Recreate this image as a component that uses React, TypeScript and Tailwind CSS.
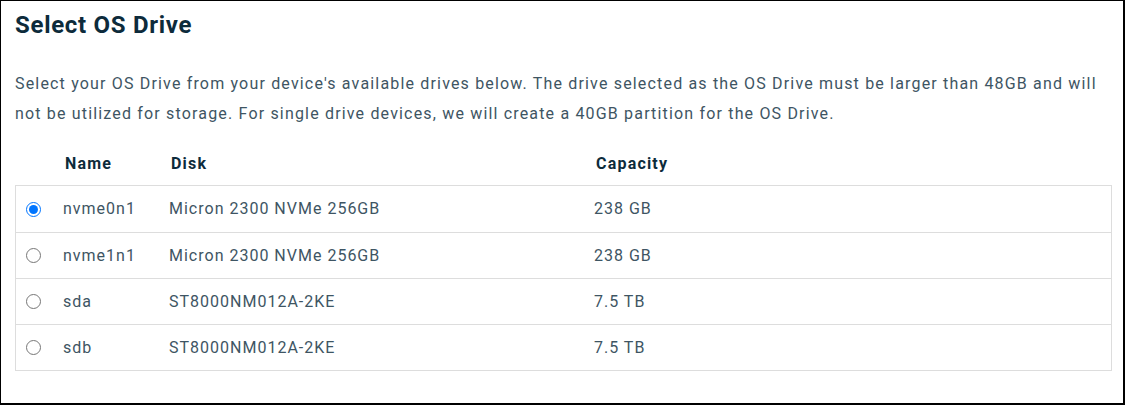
const drives = [
  { name: "nvme0n1", disk: "Micron 2300 NVMe 256GB", capacity: "238 GB" },
  { name: "nvme1n1", disk: "Micron 2300 NVMe 256GB", capacity: "238 GB" },
  { name: "sda", disk: "ST8000NM012A-2KE", capacity: "7.5 TB" },
  { name: "sdb", disk: "ST8000NM012A-2KE", capacity: "7.5 TB" },
];

export default function App() {
  return (
    <div
      className="w-[1125px] h-[405px] bg-white border-l border-t border-r-2 border-b-2 border-black px-[14px] pt-[8px]"
      style={{ fontFamily: "Roboto, 'Liberation Sans', sans-serif" }}
    >
      <h1 className="text-[24px] font-bold text-[#0d2b3b] leading-[32px] tracking-[0.7px]">Select OS Drive</h1>

      <p className="mt-[28px] text-[16px] leading-[30px] text-[#3e5563] tracking-[1.17px] whitespace-nowrap">
        Select your OS Drive from your device's available drives below. The drive selected as the OS Drive must be larger than 48GB and will
        <br />
        not be utilized for storage. For single drive devices, we will create a 40GB partition for the OS Drive.
      </p>

      <div className="mt-[10px] w-[1097px]">
        {/* header */}
        <div className="grid grid-cols-[36px_106px_425px_1fr] h-[46px] pt-[4px] items-center text-[16px] font-bold text-[#0d2b3b] tracking-[1.2px]">
          <div />
          <div className="pl-[14px]">Name</div>
          <div className="pl-[14px]">Disk</div>
          <div className="pl-[14px]">Capacity</div>
        </div>

        <div className="border border-[#dddddd]">
          {drives.map((d, i) => (
            <label
              key={d.name}
              className={`grid grid-cols-[35px_106px_425px_1fr] h-[46px] items-center text-[16px] text-[#3e5563] tracking-[1px] ${
                i > 0 ? "border-t border-[#dddddd]" : ""
              }`}
            >
              <div className="pl-[10px] flex items-center">
                <input
                  type="radio"
                  name="osdrive"
                  defaultChecked={i === 0}
                  className="m-0 w-[15px] h-[15px] accent-[#0075ff]"
                />
              </div>
              <div className="pl-[12px]">{d.name}</div>
              <div className="pl-[12px]">{d.disk}</div>
              <div className="pl-[12px]">{d.capacity}</div>
            </label>
          ))}
        </div>
      </div>
    </div>
  );
}
